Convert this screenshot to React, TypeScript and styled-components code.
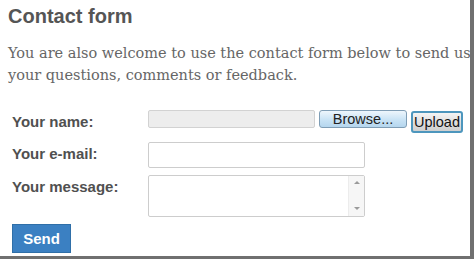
import React from 'react'
import styled, { createGlobalStyle } from 'styled-components'

const GlobalStyle = createGlobalStyle`
  html, body {
    margin: 0;
    padding: 0;
    background: #fff;
  }
`

const Frame = styled.div`
  width: 474px;
  height: 259px;
  box-sizing: border-box;
  padding-left: 8px;
  border-right: 4px solid #707070;
  border-bottom: 3px solid #707070;
  overflow: hidden;
  background: #fff;
`

const Title = styled.h2`
  margin: 4px 0 0;
  font-family: 'Liberation Sans', Arial, sans-serif;
  font-size: 20px;
  line-height: 24px;
  font-weight: bold;
  color: #555;
`

const Intro = styled.p`
  margin: 14px 0 0;
  font-family: 'DejaVu Serif', Georgia, serif;
  font-size: 14.5px;
  line-height: 22px;
  color: #666;
  white-space: nowrap;
`

const Form = styled.form`
  margin-top: 24px;
  padding-left: 4px;
  display: grid;
  grid-template-columns: 136px auto;
  grid-template-rows: 32px 33px 49px auto;
  align-items: start;
`

const Label = styled.label`
  padding-top: 3px;
  font-family: 'Liberation Sans', Arial, sans-serif;
  font-size: 15px;
  line-height: 18px;
  font-weight: bold;
  color: #505050;
`

const Field = styled.div`
  display: flex;
  align-items: flex-start;
  gap: 4px;
`

const TextInput = styled.input<{ $width: number; $height: number; $shaded?: boolean }>`
  box-sizing: border-box;
  width: ${(p) => p.$width}px;
  height: ${(p) => p.$height}px;
  margin: 0;
  padding: 0 4px;
  border: 1px solid ${(p) => (p.$shaded ? '#d2d2d2' : '#cdcdcd')};
  border-radius: 2px;
  background: ${(p) => (p.$shaded ? '#ededed' : '#fff')};
  outline: none;
`

const BrowseButton = styled.button`
  box-sizing: border-box;
  width: 88px;
  height: 18px;
  margin: 0;
  padding: 0;
  border: 1px solid #7f9db5;
  border-radius: 3px;
  background: linear-gradient(#eef6fc, #c9e3f5 55%, #b5d6ee);
  font-family: 'Liberation Sans', Arial, sans-serif;
  font-size: 14.5px;
  line-height: 16px;
  color: #222;
`

const UploadButton = styled.button`
  box-sizing: border-box;
  width: 52px;
  height: 22px;
  margin: 1px 0 0;
  padding: 0;
  border: 2px solid #4d96bd;
  border-radius: 3px;
  background: linear-gradient(#f4f4f4, #dcdcdc 60%, #cfcfcf);
  font-family: 'Liberation Sans', Arial, sans-serif;
  font-size: 14.5px;
  line-height: 18px;
  color: #111;
`

const MessageBox = styled.div`
  box-sizing: border-box;
  width: 217px;
  height: 42px;
  display: flex;
  border: 1px solid #cdcdcd;
  border-radius: 2px;
  background: #fff;
`

const MessageArea = styled.textarea`
  flex: 1;
  margin: 0;
  padding: 2px 4px;
  border: none;
  resize: none;
  outline: none;
  background: transparent;
`

const ScrollTrack = styled.div`
  width: 15px;
  display: flex;
  flex-direction: column;
  justify-content: space-between;
  align-items: center;
  padding: 5px 0 6px;
  background: #f6f6f6;
  border-left: 1px solid #ececec;
`

const Arrow = styled.span<{ $down?: boolean }>`
  width: 0;
  height: 0;
  border-left: 3px solid transparent;
  border-right: 3px solid transparent;
  ${(p) => (p.$down ? 'border-top: 3px solid #9a9a9a;' : 'border-bottom: 3px solid #9a9a9a;')}
`

const SendButton = styled.button`
  box-sizing: border-box;
  width: 59px;
  height: 29px;
  margin: 0;
  padding: 0;
  border: 1px solid #2f6fa8;
  background: #3b80c2;
  font-family: 'Liberation Sans', Arial, sans-serif;
  font-size: 15px;
  font-weight: bold;
  color: #fff;
`

const App: React.FC = () => {
  return (
    <>
      <GlobalStyle />
      <Frame>
        <Title>Contact form</Title>
        <Intro>
          You are also welcome to use the contact form below to send us
          <br />
          your questions, comments or feedback.
        </Intro>
        <Form onSubmit={(e) => e.preventDefault()}>
          <Label htmlFor="name">Your name:</Label>
          <Field>
            <TextInput id="name" $width={167} $height={18} $shaded readOnly />
            <BrowseButton type="button">Browse...</BrowseButton>
            <UploadButton type="button">Upload</UploadButton>
          </Field>

          <Label htmlFor="email">Your e-mail:</Label>
          <Field>
            <TextInput id="email" type="text" $width={217} $height={26} />
          </Field>

          <Label htmlFor="message">Your message:</Label>
          <Field>
            <MessageBox>
              <MessageArea id="message" />
              <ScrollTrack>
                <Arrow />
                <Arrow $down />
              </ScrollTrack>
            </MessageBox>
          </Field>

          <SendButton type="submit">Send</SendButton>
        </Form>
      </Frame>
    </>
  )
}

export default App
